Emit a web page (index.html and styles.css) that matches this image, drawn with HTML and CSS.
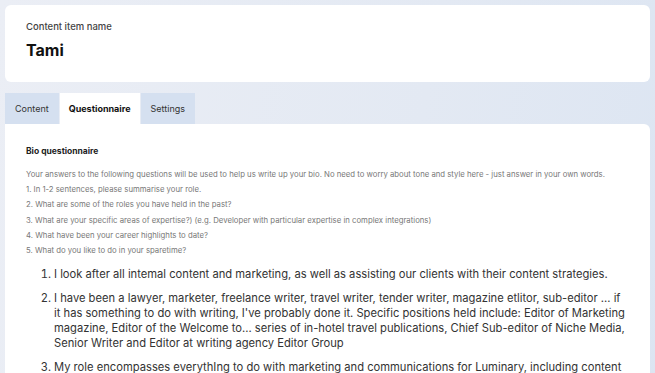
FILE: index.html
```html
<!DOCTYPE html>
<html lang="en">
<head>
    <meta charset="UTF-8">
    <meta name="viewport" content="width=device-width, initial-scale=1.0">
    <title>Content item - Tami</title>
    <link rel="stylesheet" href="styles.css">
</head>
<body>
    <div class="page">
        <section class="name-card">
            <div class="name-label">Content item name</div>
            <h1 class="name-value">Tami</h1>
        </section>

        <nav class="tabs">
            <button class="tab">Content</button>
            <button class="tab active">Questionnaire</button>
            <button class="tab">Settings</button>
        </nav>

        <section class="panel">
            <h2 class="panel-title">Bio questionnaire</h2>
            <div class="intro">
                <p>Your answers to the following questions will be used to help us write up your bio. No need to worry about tone and style here - just answer in your own words.</p>
                <p>1. In 1-2 sentences, please summarise your role.</p>
                <p>2. What are some of the roles you have held in the past?</p>
                <p>3. What are your specific areas of expertise?) (e.g. Developer with particular expertise in complex integrations)</p>
                <p>4. What have been your career highlights to date?</p>
                <p>5. What do you like to do in your sparetime?</p>
            </div>
            <ol class="answers">
                <li>I look after all intemal content and marketing, as well as assisting our clients with their content strategies.</li>
                <li>I have been a lawyer, marketer, freelance writer, travel writer, tender writer, magazine etlitor, sub-editor ... if it has something to do with writing, I've probably done it. Specific positions held include: Editor of Marketing magazine, Editor of the Welcome to... series of in-hotel travel publications, Chief Sub-editor of Niche Media, Senior Writer and Editor at writing agency Editor Group</li>
                <li>My role encompasses everythIng to do with marketing and communications for Luminary, including content strategy, social media, events and internal communications.</li>
            </ol>
        </section>
    </div>
</body>
</html>
```

FILE: styles.css
```css
body {
    margin: 0;
    font-family: Inter, "Liberation Sans", sans-serif;
    background: linear-gradient(100deg, #ebeef5 0%, #e3e9f3 60%, #dce5f2 100%);
    color: #222;
}

.page {
    padding: 5px 5px 0 5px;
    display: flex;
    flex-direction: column;
}

.name-card {
    background: #fff;
    border-radius: 6px;
    padding: 16px 21px 21px 21px;
    height: 40px;
}

.name-label {
    font-size: 9.5px;
    color: #444;
    font-weight: 500;
}

.name-value {
    margin: 8px 0 0 0;
    font-size: 16px;
    font-weight: 700;
    color: #111;
}

.tabs {
    display: flex;
    margin-top: 11px;
    gap: 1px;
}

.tab {
    background: #d5e0f0;
    border: none;
    font-family: inherit;
    font-size: 9px;
    color: #333;
    height: 31px;
    padding: 0 10px;
    cursor: pointer;
}

.tab.active {
    background: #fff;
    font-weight: 700;
    color: #111;
    padding: 0 9px;
}

.panel {
    background: #fff;
    border-radius: 0 6px 0 0;
    padding: 22px 22px 20px 21px;
    min-height: 300px;
}

.panel-title {
    margin: 0 0 11px 0;
    font-size: 8.5px;
    font-weight: 700;
    color: #222;
}

.intro p {
    margin: 0;
    font-size: 7.75px;
    line-height: 15.2px;
    color: #777;
}

.answers {
    margin: 9px 0 0 0;
    padding-left: 28px;
    font-size: 11.2px;
    line-height: 15px;
    color: #333;
}

.answers li {
    margin-bottom: 9px;
}
```
